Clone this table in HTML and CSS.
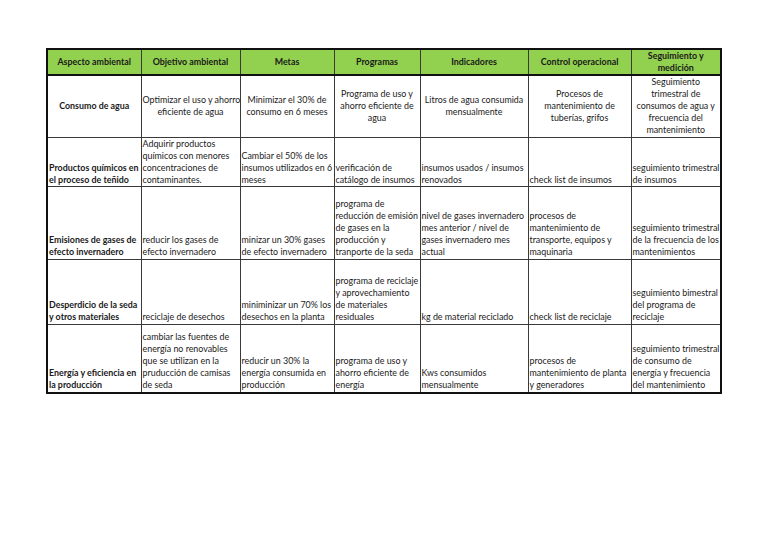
FILE: index.html
```html
<!DOCTYPE html>
<html lang="es">
<head>
<meta charset="utf-8">
<title>Matriz ambiental</title>
<link rel="stylesheet" href="styles.css">
</head>
<body>
<div class="page">
<table class="matrix">
  <colgroup>
    <col class="c1"><col class="c2"><col class="c3"><col class="c4"><col class="c5"><col class="c6"><col class="c7">
  </colgroup>
  <thead>
    <tr class="r-head">
      <th>Aspecto ambiental</th>
      <th>Objetivo ambiental</th>
      <th>Metas</th>
      <th>Programas</th>
      <th>Indicadores</th>
      <th>Control operacional</th>
      <th>Seguimiento y<br>medición</th>
    </tr>
  </thead>
  <tbody>
    <tr class="r1 center">
      <td class="aspect">Consumo de agua</td>
      <td>Optimizar el uso y ahorro<br>eficiente de agua</td>
      <td>Minimizar el 30% de<br>consumo en 6 meses</td>
      <td>Programa de uso y<br>ahorro eficiente de<br>agua</td>
      <td>Litros de agua consumida<br>mensualmente</td>
      <td>Procesos de<br>mantenimiento de<br>tuberías, grifos</td>
      <td>Seguimiento<br>trimestral de<br>consumos de agua y<br>frecuencia del<br>mantenimiento</td>
    </tr>
    <tr class="r2">
      <td class="aspect">Productos químicos en<br>el proceso de teñido</td>
      <td>Adquirir productos<br>químicos con menores<br>concentraciones de<br>contaminantes.</td>
      <td>Cambiar el 50% de los<br>insumos utilizados en 6<br>meses</td>
      <td>verificación de<br>catálogo de insumos</td>
      <td>insumos usados / insumos<br>renovados</td>
      <td>check list de insumos</td>
      <td>seguimiento trimestral<br>de insumos</td>
    </tr>
    <tr class="r3">
      <td class="aspect">Emisiones de gases de<br>efecto invernadero</td>
      <td>reducir los gases de<br>efecto invernadero</td>
      <td>minizar un 30% gases<br>de efecto invernadero</td>
      <td>programa de<br>reducción de emisión<br>de gases en la<br>producción y<br>tranporte de la seda</td>
      <td>nivel de gases invernadero<br>mes anterior / nivel de<br>gases invernadero mes<br>actual</td>
      <td>procesos de<br>mantenimiento de<br>transporte, equipos y<br>maquinaria</td>
      <td>seguimiento trimestral<br>de la frecuencia de los<br>mantenimientos</td>
    </tr>
    <tr class="r4">
      <td class="aspect">Desperdicio de la seda<br>y otros materiales</td>
      <td>reciclaje de desechos</td>
      <td>miniminizar un 70% los<br>desechos en la planta</td>
      <td>programa de reciclaje<br>y aprovechamiento<br>de materiales<br>residuales</td>
      <td>kg de material reciclado</td>
      <td>check list de reciclaje</td>
      <td>seguimiento bimestral<br>del programa de<br>reciclaje</td>
    </tr>
    <tr class="r5">
      <td class="aspect">Energía y eficiencia en<br>la producción</td>
      <td>cambiar las fuentes de<br>energía no renovables<br>que se utilizan en la<br>pruducción de camisas<br>de seda</td>
      <td>reducir un 30% la<br>energía consumida en<br>producción</td>
      <td>programa de uso y<br>ahorro eficiente de<br>energía</td>
      <td>Kws consumidos<br>mensualmente</td>
      <td>procesos de<br>mantenimiento de planta<br>y generadores</td>
      <td>seguimiento trimestral<br>de consumo de<br>energía y frecuencia<br>del mantenimiento</td>
    </tr>
  </tbody>
</table>
</div>
</body>
</html>
```

FILE: styles.css
```css
html, body {
  margin: 0;
  padding: 0;
  background: #ffffff;
}

.page {
  padding: 48px 0 0 46px;
}

.matrix {
  border-collapse: collapse;
  table-layout: fixed;
  width: 674px;
  border: 2px solid #111111;
  font-family: Lato, "Open Sans", sans-serif;
  font-size: 8.9px;
  line-height: 12px;
  color: #1a1a1a;
}

.c1 { width: 94px; }
.c2 { width: 99px; }
.c3 { width: 94px; }
.c4 { width: 86px; }
.c5 { width: 108px; }
.c6 { width: 103px; }
.c7 { width: 90px; }

.matrix th,
.matrix td {
  border: 1px solid #3a3a3a;
  padding: 0 1px 1px 1px;
  white-space: nowrap;
  overflow: hidden;
}

.matrix th {
  background: #92d050;
  font-weight: 700;
  text-align: center;
  vertical-align: middle;
  height: 23px;
  padding: 0 1px;
  border-bottom: 2px solid #111111;
}

.matrix td {
  text-align: left;
  vertical-align: bottom;
}

.matrix .center td {
  text-align: center;
  vertical-align: middle;
}

.matrix td.aspect {
  font-weight: 700;
}

.r1 td { height: 59px; }
.r2 td { height: 47px; padding-bottom: 0; }
.r3 td { height: 71px; }
.r4 td { height: 63px; }
.r5 td { height: 66px; }
```
